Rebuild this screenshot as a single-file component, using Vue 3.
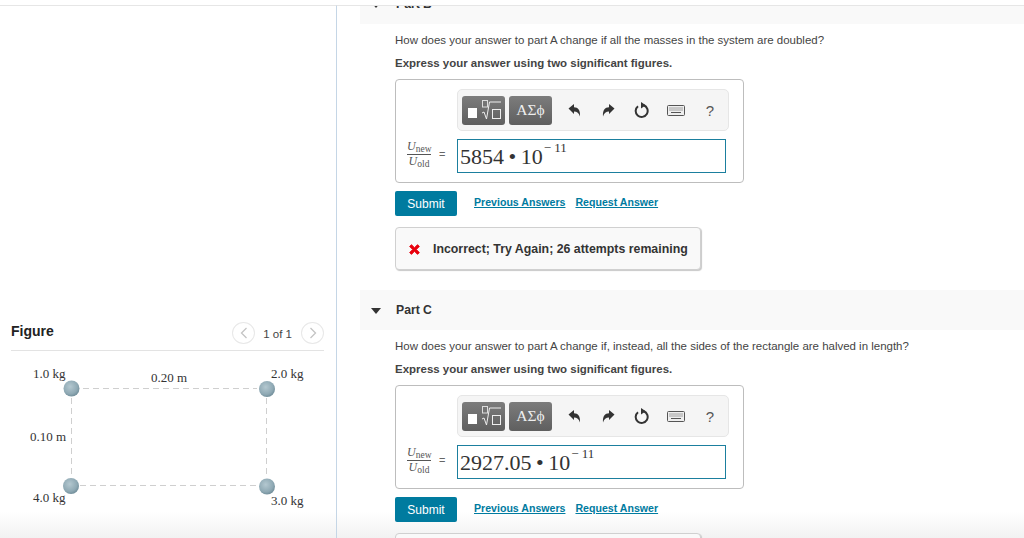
<script setup>
const parts = [
  { name: 'Part B', question: 'How does your answer to part A change if all the masses in the system are doubled?', value: '5854', clipped: true },
  { name: 'Part C', question: 'How does your answer to part A change if, instead, all the sides of the rectangle are halved in length?', value: '2927.05', clipped: false }
]
const masses = [
  { cx: 71.5, cy: 36.5 },
  { cx: 267, cy: 37 },
  { cx: 71, cy: 134 },
  { cx: 267, cy: 134.5 }
]
const labels = [
  { x: 33, y: 26, t: '1.0 kg' },
  { x: 151, y: 30, t: '0.20 m' },
  { x: 271, y: 26, t: '2.0 kg' },
  { x: 30, y: 89, t: '0.10 m' },
  { x: 33, y: 150, t: '4.0 kg' },
  { x: 271, y: 153, t: '3.0 kg' }
]
</script>

<template>
  <div class="page">
    <div class="fade"></div>
    <aside class="left">
      <header class="fig-head">
        <h2 class="fig-title">Figure</h2>
        <div class="pager">
          <span class="round">
            <svg width="8" height="12" viewBox="0 0 8 12"><path d="M6.500 1 1.500 6l5 5" fill="none" stroke="#c4c4c4" stroke-width="1.300"/></svg>
          </span>
          <span class="count">1 of 1</span>
          <span class="round">
            <svg width="8" height="12" viewBox="0 0 8 12"><path d="M1.500 1l5 5-5 5" fill="none" stroke="#c4c4c4" stroke-width="1.300"/></svg>
          </span>
        </div>
      </header>
      <svg class="diagram" width="336" height="170" viewBox="0 0 336 170">
        <defs>
          <radialGradient id="ball" cx="0.42" cy="0.38" r="0.65">
            <stop offset="0" stop-color="#b4c8d0"/>
            <stop offset="0.7" stop-color="#8fa9b4"/>
            <stop offset="1" stop-color="#6f8c98"/>
          </radialGradient>
        </defs>
        <g fill="none" stroke="#cfcfcf" stroke-width="1" stroke-dasharray="6 4">
          <path d="M83 36.500H257"/>
          <path d="M80 133.500H258"/>
          <path d="M71.500 46V126"/>
          <path d="M266.500 46V126"/>
        </g>
        <circle v-for="(m, i) in masses" :key="i" :cx="m.cx" :cy="m.cy" r="8" fill="url(#ball)"/>
        <text v-for="l in labels" :key="l.t" :x="l.x" :y="l.y" class="dia-text">{{ l.t }}</text>
      </svg>
    </aside>

    <main class="right">
      <div class="scroll">
        <section v-for="p in parts" :key="p.name" class="part">
          <div class="band">
            <svg class="caret" width="10" height="6" viewBox="0 0 10 6"><path d="M0 0h10L5 6z" fill="#333"/></svg>
            <span class="part-name">{{ p.name }}</span>
          </div>
          <div class="body">
            <p class="question">{{ p.question }}</p>
            <p class="hint">Express your answer using two significant figures.</p>
            <div class="card">
              <div class="toolbar">
                <span class="tbtn">
                  <svg width="43" height="29" viewBox="0 0 43 29">
                    <rect x="6" y="12" width="9" height="10" fill="#fff"/>
                    <rect x="20.500" y="4.500" width="5" height="6.500" fill="none" stroke="#ddd"/>
                    <path d="M20 17l2-1 2.500 7 3-17H39" fill="none" stroke="#eee" stroke-width="1"/>
                    <rect x="30.500" y="13.500" width="8" height="9" fill="none" stroke="#eee"/>
                  </svg>
                </span>
                <span class="tbtn greek">ΑΣϕ</span>
                <span class="tools">
                  <svg width="13" height="15" viewBox="0 0 13 15"><path d="M0.500 5.500 6 1v3.200c4 0 6.500 3 6 9.300-1-3.500-3-5-6-5V11z" fill="#333"/></svg>
                  <svg width="13" height="15" viewBox="0 0 13 15"><path d="M12.500 5.500 7 1v3.200c-4 0-6.500 3-6 9.300 1-3.500 3-5 6-5V11z" fill="#333"/></svg>
                  <svg width="16" height="16" viewBox="0 0 16 16"><path d="M9.700 3.300A6 6 0 1 1 4 4.200" fill="none" stroke="#333" stroke-width="2"/><path d="M7 0v6.500l4.800-3.300z" fill="#333"/></svg>
                  <svg width="18" height="11" viewBox="0 0 18 11"><rect x="0.500" y="0.500" width="17" height="10" rx="1" fill="#eee" stroke="#555"/><path d="M2.500 3h13M2.500 5h13" stroke="#555" stroke-dasharray="1 1"/><path d="M4 7.500h10" stroke="#555"/></svg>
                  <span class="help">?</span>
                </span>
              </div>
              <div class="answer">
                <div class="lhs">
                  <span class="frac">
                    <span class="num"><i>U</i><small>new</small></span>
                    <span class="den"><i>U</i><small>old</small></span>
                  </span>
                  <span class="eq">=</span>
                </div>
                <div class="input">
                  <span>{{ p.value }}</span><span class="dot">•</span><span>10</span><sup class="exp">− 11</sup>
                </div>
              </div>
            </div>
            <div class="actions">
              <button class="submit">Submit</button>
              <a class="link first">Previous Answers</a>
              <a class="link">Request Answer</a>
            </div>
            <div class="feedback">
              <template v-if="p.clipped">
                <svg width="13" height="13" viewBox="0 0 12 12"><path d="M1.500 3.200 3.200 1.500 6 4.300l2.800-2.800 1.700 1.700L7.700 6l2.800 2.800-1.700 1.700L6 7.700l-2.800 2.800-1.700-1.700L4.300 6z" fill="#e8000d" stroke="#e8000d" stroke-width="0.800"/></svg>
                <span class="fb-text">Incorrect; Try Again; 26 attempts remaining</span>
              </template>
            </div>
          </div>
        </section>
      </div>
    </main>
  </div>
</template>

<style scoped>
.page {
  position: relative;
  width: 1024px;
  height: 538px;
  overflow: hidden;
  background: #fff;
  display: flex;
  padding-top: 5px;
  box-sizing: border-box;
  font-family: "Liberation Sans", Arial, sans-serif;
  color: #333;
}
.fade {
  position: absolute;
  left: 0;
  right: 0;
  bottom: 0;
  height: 26px;
  background: linear-gradient(#fff, #f2f2f2);
}
.left {
  position: relative;
  width: 337px;
  flex: none;
  box-sizing: border-box;
  border-top: 1px solid #e6e6e6;
  border-right: 1px solid #c5d6e6;
  padding-top: 313px;
}
.fig-head {
  display: flex;
  justify-content: space-between;
  align-items: center;
  height: 31px;
  margin: 0 12px 0 11px;
  border-bottom: 1px solid #e3e3e3;
}
.fig-title {
  margin: 0 0 8px;
  font-size: 14px;
  line-height: 18px;
  font-weight: 700;
  color: #222;
}
.pager {
  display: flex;
  align-items: center;
  margin-bottom: 3px;
}
.round {
  width: 23px;
  height: 22px;
  box-sizing: border-box;
  border: 1px solid #e8e8e8;
  border-radius: 50%;
  display: flex;
  align-items: center;
  justify-content: center;
}
.count {
  margin: 2px 9px 0 8px;
  font-size: 11.500px;
  color: #444;
}
.diagram {
  display: block;
  margin-top: 1px;
}
.dia-text {
  font-family: "Liberation Serif", serif;
  font-size: 13px;
  fill: #333;
}
.right {
  position: relative;
  flex: 1;
  min-width: 0;
  border-top: 1px solid #e6e6e6;
  overflow: hidden;
  padding-left: 23px;
}
.scroll {
  margin-top: -22px;
}
.band {
  height: 40px;
  background: #f9f9f9;
  display: flex;
  align-items: center;
}
.caret {
  margin-left: 11px;
  margin-top: 1px;
}
.part-name {
  margin-left: 15px;
  font-size: 12.200px;
  font-weight: 700;
  color: #333;
}
.body {
  padding: 8px 0 20px 35px;
}
.question {
  margin: 0;
  font-size: 11.480px;
  line-height: 16px;
  color: #444;
}
.hint {
  margin: 7px 0 0;
  font-size: 11.480px;
  line-height: 16px;
  font-weight: 700;
  color: #444;
}
.card {
  margin-top: 8px;
  width: 349px;
  height: 104px;
  box-sizing: border-box;
  border: 1px solid #bdbdbd;
  border-radius: 4px;
  padding: 9px 14px 0 61px;
}
.toolbar {
  width: 272px;
  height: 42px;
  box-sizing: border-box;
  background: #f5f5f5;
  border: 1px solid #e6e6e6;
  border-radius: 5px;
  display: flex;
  align-items: center;
  padding-left: 4px;
  gap: 4px;
}
.tbtn {
  width: 43px;
  height: 29px;
  border-radius: 3px;
  background: linear-gradient(#7c7c7c, #5f5f5f);
  display: flex;
  align-items: center;
  justify-content: center;
  color: #eee;
  flex: none;
}
.greek {
  font-family: "Liberation Serif", serif;
  font-size: 15.500px;
}
.tools {
  flex: 1;
  display: grid;
  grid-template-columns: repeat(5, 34px);
  align-items: center;
  justify-items: center;
  padding-left: 1px;
}
.help {
  font-size: 15px;
  color: #555;
}
.answer {
  display: flex;
  align-items: center;
  margin-top: 8px;
  margin-left: -61px;
}
.lhs {
  width: 61px;
  flex: none;
  display: flex;
  align-items: center;
  padding-left: 11px;
  margin-bottom: 4px;
  box-sizing: border-box;
}
.frac {
  display: flex;
  flex-direction: column;
  width: 24px;
  font-family: "Liberation Serif", serif;
  font-size: 12px;
  line-height: 13px;
  color: #555;
  text-align: center;
  white-space: nowrap;
}
.num {
  border-bottom: 1px solid #555;
}
.frac small {
  font-size: 9.500px;
  position: relative;
  top: 2px;
}
.eq {
  margin-left: 8px;
  font-size: 11px;
  color: #666;
}
.input {
  width: 269px;
  height: 34px;
  box-sizing: border-box;
  border: 1px solid #1b7f9e;
  padding-left: 2px;
  font-family: "Liberation Serif", serif;
  font-size: 22px;
  line-height: 33px;
  color: #333;
  white-space: nowrap;
}
.dot {
  margin: 0 4.500px;
}
.exp {
  font-size: 13px;
  line-height: 0;
  vertical-align: 12px;
  margin-left: 1px;
}
.actions {
  margin-top: 8px;
  display: flex;
  align-items: flex-start;
}
.submit {
  width: 62px;
  height: 25px;
  padding: 0;
  border: none;
  border-radius: 2px;
  background: #007b9f;
  color: #fff;
  font-family: "Liberation Sans", Arial, sans-serif;
  font-size: 12px;
}
.link {
  font-size: 10.600px;
  line-height: 14px;
  margin-top: 4px;
  margin-left: 10px;
  font-weight: 700;
  color: #007b9f;
  text-decoration: underline;
}
.link.first {
  margin-left: 17px;
}
.feedback {
  margin-top: 11px;
  width: 306px;
  height: 43px;
  box-sizing: border-box;
  border: 1px solid #d0d0d0;
  border-radius: 4px;
  background: #f9f9f9;
  box-shadow: 1px 1px 1px #c8c8c8;
  display: flex;
  align-items: center;
  padding: 1px 0 0 12px;
  gap: 12px;
}
.fb-text {
  font-size: 12.350px;
  font-weight: 700;
  color: #333;
}
</style>
